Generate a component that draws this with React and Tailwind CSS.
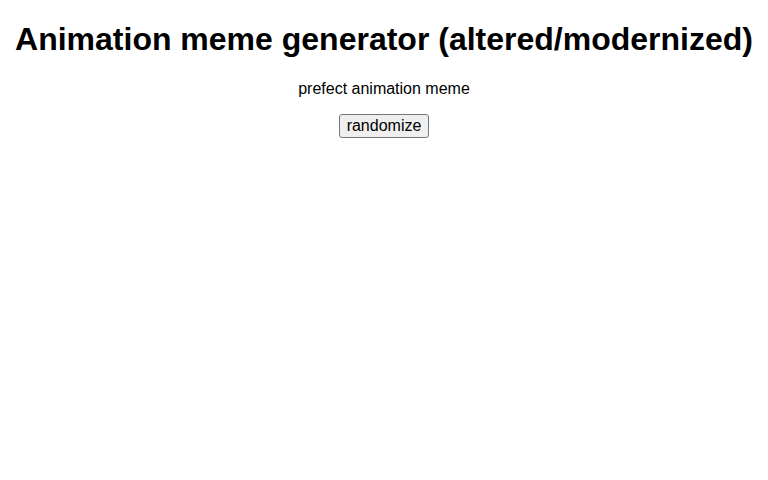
export default function App() {
  return (
    <div className="min-h-screen bg-white text-center text-black font-['Liberation_Sans',Arial,sans-serif] leading-[normal]">
      <h1 className="pt-[21.44px] mb-[21.44px] text-[32px] font-bold">
        Animation meme generator (altered/modernized)
      </h1>
      <p className="mb-[16px] text-[16px]">prefect animation meme</p>
      <button
        type="button"
        className="px-[7px] py-[2px] text-[16px] bg-[#efefef] border border-[#767676] rounded-[3px] hover:bg-[#e5e5e5]"
      >
        randomize
      </button>
    </div>
  );
}
